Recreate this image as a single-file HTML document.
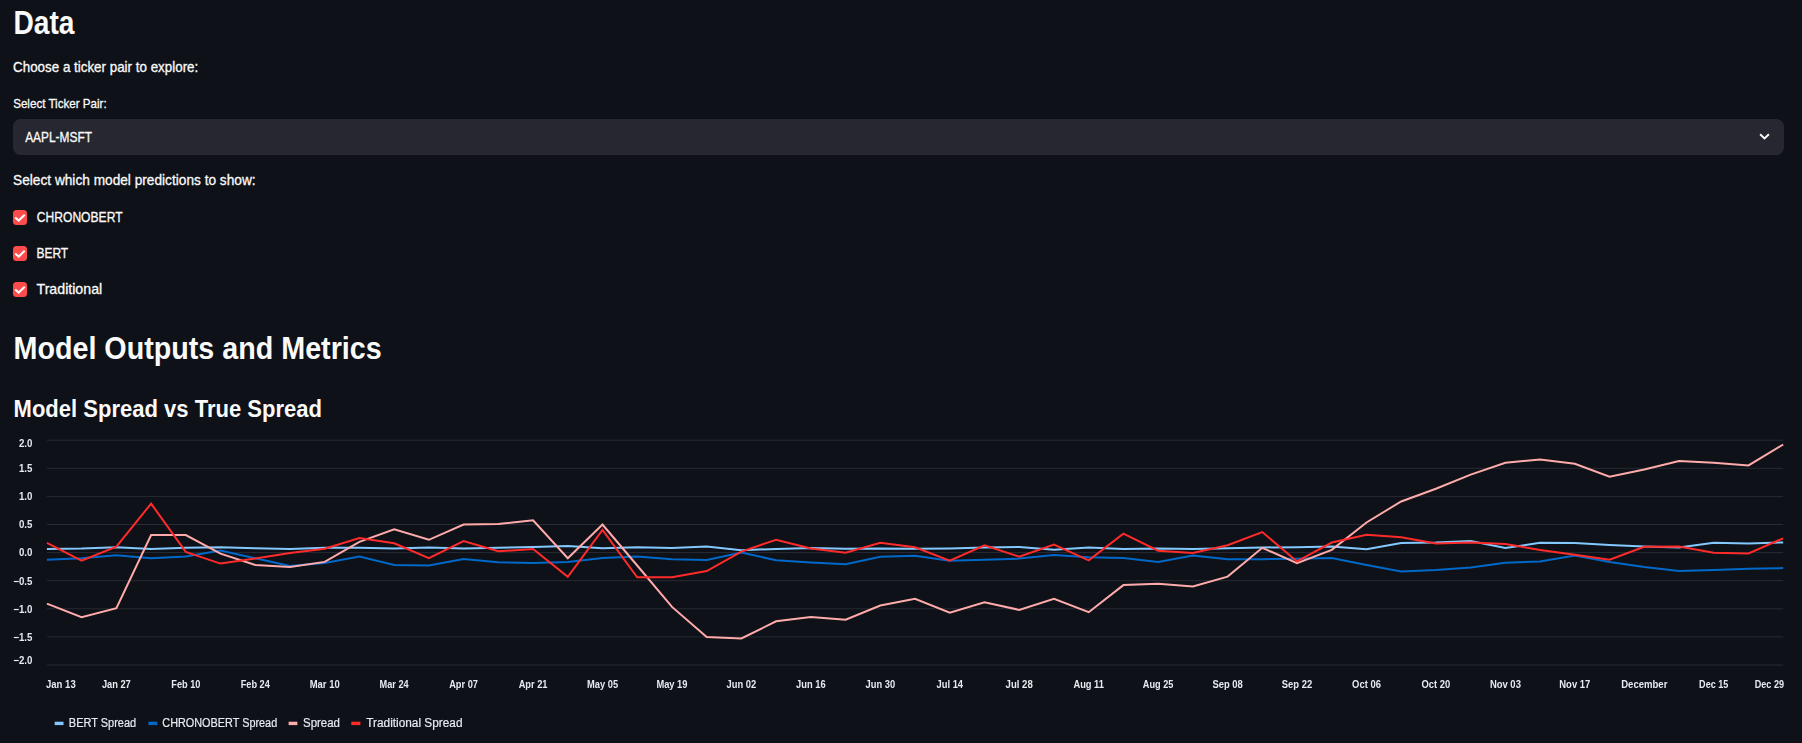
<!DOCTYPE html>
<html lang="en">
<head>
<meta charset="utf-8">
<title>Data · Model Outputs and Metrics</title>
<style>
html,body{margin:0;padding:0;background:#0e1117;}
body{width:1802px;height:743px;position:relative;overflow:hidden;color:#fafafa;
  font-family:"Liberation Sans",sans-serif;-webkit-font-smoothing:antialiased;}
main{position:absolute;left:0;top:0;width:1802px;height:743px;}
.t{position:absolute;left:0;top:0;margin:0;padding:0;white-space:nowrap;transform-origin:0 0;font-weight:400;color:#fafafa;display:block;-webkit-text-stroke:0.3px #fafafa;}
h2.t,h3.t{font-weight:700;-webkit-text-stroke:0;}
.select{position:absolute;left:13px;top:119.2px;width:1771px;height:35.8px;background:#262730;border-radius:7.5px;box-sizing:border-box;}
.select svg{position:absolute;left:1745.7px;top:13.8px;}
.cb{position:absolute;left:13px;width:14.2px;height:14.8px;background:#ff4b4b;border-radius:3.5px;}
.cb svg{position:absolute;left:0;top:0;display:block;}
.chart{position:absolute;left:0;top:0;font-family:"Liberation Sans",sans-serif;will-change:transform;}
</style>
</head>
<body>
<main>
<h2 class="t" style="font-size:32.5px;line-height:39px;transform:translate(13.44px,3.64px) scaleX(0.8656);">Data</h2>
<p class="t" style="font-size:14.3px;line-height:17px;transform:translate(13.03px,58.65px) scaleX(0.9361);">Choose a ticker pair to explore:</p>
<label class="t" style="font-size:13px;line-height:16px;transform:translate(13.18px,96.00px) scaleX(0.8924);">Select Ticker Pair:</label>
<div class="select" role="combobox" aria-label="Select Ticker Pair">
<svg viewBox="0 0 12 8" width="11" height="7.4" aria-hidden="true"><path d="M1.2 1.4 L6 6 L10.8 1.4" fill="none" stroke="#fafafa" stroke-width="2.1"/></svg>
</div>
<div class="t" style="font-size:13.9px;line-height:17px;transform:translate(25.18px,129.08px) scaleX(0.8563);">AAPL-MSFT</div>
<p class="t" style="font-size:14.3px;line-height:17px;transform:translate(13.08px,171.65px) scaleX(0.9566);">Select which model predictions to show:</p>
<span class="cb" style="top:210.1px"><svg viewBox="0 0 14 14.7" width="14.2" height="14.8" aria-hidden="true"><path d="M2.1 7.5 L5.6 10.5 L11.6 4.8" fill="none" stroke="#fff" stroke-width="2" stroke-linecap="butt" stroke-linejoin="miter"/></svg></span>
<label class="t" style="font-size:13.9px;line-height:17px;transform:translate(36.80px,208.78px) scaleX(0.8701);">CHRONOBERT</label>
<span class="cb" style="top:246.1px"><svg viewBox="0 0 14 14.7" width="14.2" height="14.8" aria-hidden="true"><path d="M2.1 7.5 L5.6 10.5 L11.6 4.8" fill="none" stroke="#fff" stroke-width="2" stroke-linecap="butt" stroke-linejoin="miter"/></svg></span>
<label class="t" style="font-size:13.9px;line-height:17px;transform:translate(36.42px,244.78px) scaleX(0.8625);">BERT</label>
<span class="cb" style="top:282.1px"><svg viewBox="0 0 14 14.7" width="14.2" height="14.8" aria-hidden="true"><path d="M2.1 7.5 L5.6 10.5 L11.6 4.8" fill="none" stroke="#fff" stroke-width="2" stroke-linecap="butt" stroke-linejoin="miter"/></svg></span>
<label class="t" style="font-size:13.9px;line-height:17px;transform:translate(36.49px,280.78px) scaleX(1.0212);">Traditional</label>
<h2 class="t" style="font-size:31.3px;line-height:38px;transform:translate(13.51px,330.05px) scaleX(0.9167);">Model Outputs and Metrics</h2>
<h3 class="t" style="font-size:23.1px;line-height:28px;transform:translate(13.55px,395.00px) scaleX(0.9536);">Model Spread vs True Spread</h3>
<svg class="chart" width="1802" height="743" viewBox="0 0 1802 743" role="img" aria-label="Model Spread vs True Spread line chart">
<g stroke="#282a34" stroke-width="1">
<line x1="46.9" x2="1783.2" y1="440.20" y2="440.20"/>
<line x1="46.9" x2="1783.2" y1="468.30" y2="468.30"/>
<line x1="46.9" x2="1783.2" y1="496.40" y2="496.40"/>
<line x1="46.9" x2="1783.2" y1="524.50" y2="524.50"/>
<line x1="46.9" x2="1783.2" y1="552.60" y2="552.60"/>
<line x1="46.9" x2="1783.2" y1="580.70" y2="580.70"/>
<line x1="46.9" x2="1783.2" y1="608.80" y2="608.80"/>
<line x1="46.9" x2="1783.2" y1="636.90" y2="636.90"/>
<line x1="46.9" x2="1783.2" y1="665.00" y2="665.00"/>
</g>
<g class="ax" font-size="10.5" font-weight="700" fill="#e6eaf1" text-anchor="end">
<text x="32.4" y="447.0" textLength="13.5" lengthAdjust="spacingAndGlyphs">2.0</text>
<text x="32.4" y="472.1" textLength="13.5" lengthAdjust="spacingAndGlyphs">1.5</text>
<text x="32.4" y="500.2" textLength="13.5" lengthAdjust="spacingAndGlyphs">1.0</text>
<text x="32.4" y="528.2" textLength="13.5" lengthAdjust="spacingAndGlyphs">0.5</text>
<text x="32.4" y="556.4" textLength="13.5" lengthAdjust="spacingAndGlyphs">0.0</text>
<text x="32.4" y="584.5" textLength="19.1" lengthAdjust="spacingAndGlyphs">−0.5</text>
<text x="32.4" y="612.6" textLength="19.1" lengthAdjust="spacingAndGlyphs">−1.0</text>
<text x="32.4" y="640.7" textLength="19.1" lengthAdjust="spacingAndGlyphs">−1.5</text>
<text x="32.4" y="664.1" textLength="19.1" lengthAdjust="spacingAndGlyphs">−2.0</text>
</g>
<g class="ax" font-size="10.5" font-weight="700" fill="#e6eaf1">
<text x="46.0" y="687.9" textLength="29.7" lengthAdjust="spacingAndGlyphs">Jan 13</text>
<text x="101.9" y="687.9" textLength="28.9" lengthAdjust="spacingAndGlyphs">Jan 27</text>
<text x="171.3" y="687.9" textLength="29.1" lengthAdjust="spacingAndGlyphs">Feb 10</text>
<text x="240.7" y="687.9" textLength="29.1" lengthAdjust="spacingAndGlyphs">Feb 24</text>
<text x="309.7" y="687.9" textLength="30.0" lengthAdjust="spacingAndGlyphs">Mar 10</text>
<text x="379.6" y="687.9" textLength="29.1" lengthAdjust="spacingAndGlyphs">Mar 24</text>
<text x="449.2" y="687.9" textLength="28.8" lengthAdjust="spacingAndGlyphs">Apr 07</text>
<text x="518.7" y="687.9" textLength="28.8" lengthAdjust="spacingAndGlyphs">Apr 21</text>
<text x="587.0" y="687.9" textLength="31.1" lengthAdjust="spacingAndGlyphs">May 05</text>
<text x="656.4" y="687.9" textLength="31.1" lengthAdjust="spacingAndGlyphs">May 19</text>
<text x="726.6" y="687.9" textLength="29.6" lengthAdjust="spacingAndGlyphs">Jun 02</text>
<text x="796.1" y="687.9" textLength="29.6" lengthAdjust="spacingAndGlyphs">Jun 16</text>
<text x="865.5" y="687.9" textLength="29.6" lengthAdjust="spacingAndGlyphs">Jun 30</text>
<text x="936.5" y="687.9" textLength="26.6" lengthAdjust="spacingAndGlyphs">Jul 14</text>
<text x="1005.6" y="687.9" textLength="27.2" lengthAdjust="spacingAndGlyphs">Jul 28</text>
<text x="1073.4" y="687.9" textLength="30.6" lengthAdjust="spacingAndGlyphs">Aug 11</text>
<text x="1142.8" y="687.9" textLength="30.6" lengthAdjust="spacingAndGlyphs">Aug 25</text>
<text x="1212.4" y="687.9" textLength="30.4" lengthAdjust="spacingAndGlyphs">Sep 08</text>
<text x="1281.8" y="687.9" textLength="30.4" lengthAdjust="spacingAndGlyphs">Sep 22</text>
<text x="1352.1" y="687.9" textLength="28.8" lengthAdjust="spacingAndGlyphs">Oct 06</text>
<text x="1421.5" y="687.9" textLength="28.8" lengthAdjust="spacingAndGlyphs">Oct 20</text>
<text x="1489.9" y="687.9" textLength="31.0" lengthAdjust="spacingAndGlyphs">Nov 03</text>
<text x="1559.3" y="687.9" textLength="31.0" lengthAdjust="spacingAndGlyphs">Nov 17</text>
<text x="1621.2" y="687.9" textLength="46.2" lengthAdjust="spacingAndGlyphs">December</text>
<text x="1699.1" y="687.9" textLength="29.2" lengthAdjust="spacingAndGlyphs">Dec 15</text>
<text x="1754.8" y="687.9" textLength="29.2" lengthAdjust="spacingAndGlyphs">Dec 29</text>
</g>
<g fill="none" stroke-width="2" stroke-linejoin="miter" stroke-linecap="butt">
<path stroke="#83c9ff" d="M46.9,548.9 L81.6,548.6 L116.4,547.3 L151.1,549.1 L185.8,547.8 L220.5,547.3 L255.3,548.3 L290.0,549.1 L324.7,547.8 L359.4,547.8 L394.2,548.6 L428.9,547.4 L463.6,548.6 L498.3,547.8 L533.1,547.0 L567.8,545.9 L602.5,548.3 L637.2,547.2 L672.0,547.9 L706.7,546.4 L741.4,550.2 L776.1,548.9 L810.9,548.1 L845.6,548.8 L880.3,548.4 L915.0,548.8 L949.8,548.4 L984.5,547.5 L1019.2,547.0 L1054.0,549.8 L1088.7,547.5 L1123.4,548.9 L1158.1,548.4 L1192.9,549.0 L1227.6,548.3 L1262.3,547.4 L1297.0,547.3 L1331.8,546.6 L1366.5,549.2 L1401.2,543.1 L1435.9,542.6 L1470.7,541.0 L1505.4,548.0 L1540.1,542.8 L1574.8,543.0 L1609.6,545.0 L1644.3,546.4 L1679.0,547.4 L1713.7,542.8 L1748.5,543.6 L1783.2,542.4"/>
<path stroke="#0068c9" d="M46.9,559.7 L81.6,558.2 L116.4,555.2 L151.1,558.2 L185.8,556.4 L220.5,550.6 L255.3,558.2 L290.0,566.1 L324.7,563.1 L359.4,556.6 L394.2,564.9 L428.9,565.6 L463.6,559.0 L498.3,562.3 L533.1,563.1 L567.8,561.9 L602.5,557.9 L637.2,556.6 L672.0,559.3 L706.7,560.1 L741.4,552.5 L776.1,560.3 L810.9,562.4 L845.6,564.2 L880.3,556.8 L915.0,555.8 L949.8,560.7 L984.5,559.8 L1019.2,558.6 L1054.0,555.1 L1088.7,557.2 L1123.4,558.1 L1158.1,561.9 L1192.9,555.6 L1227.6,559.2 L1262.3,559.2 L1297.0,558.8 L1331.8,557.9 L1366.5,564.9 L1401.2,571.4 L1435.9,570.1 L1470.7,567.4 L1505.4,562.8 L1540.1,561.4 L1574.8,555.4 L1609.6,562.0 L1644.3,567.0 L1679.0,571.1 L1713.7,569.9 L1748.5,568.8 L1783.2,568.1"/>
<path stroke="#ffabab" d="M46.9,603.6 L81.6,617.2 L116.4,608.2 L151.1,535.0 L185.8,535.0 L220.5,553.6 L255.3,564.9 L290.0,566.9 L324.7,561.9 L359.4,541.9 L394.2,529.4 L428.9,539.8 L463.6,524.5 L498.3,524.1 L533.1,520.3 L567.8,558.2 L602.5,524.5 L637.2,565.5 L672.0,606.9 L706.7,636.9 L741.4,638.4 L776.1,621.3 L810.9,617.1 L845.6,619.7 L880.3,605.5 L915.0,598.7 L949.8,612.7 L984.5,602.2 L1019.2,609.9 L1054.0,598.7 L1088.7,612.2 L1123.4,585.1 L1158.1,583.7 L1192.9,586.5 L1227.6,576.6 L1262.3,547.8 L1297.0,563.2 L1331.8,549.9 L1366.5,522.5 L1401.2,501.5 L1435.9,488.8 L1470.7,474.6 L1505.4,462.8 L1540.1,459.4 L1574.8,463.8 L1609.6,476.7 L1644.3,469.5 L1679.0,461.0 L1713.7,462.8 L1748.5,465.4 L1783.2,444.5"/>
<path stroke="#ff2b2b" d="M46.9,542.8 L81.6,560.6 L116.4,546.6 L151.1,503.6 L185.8,551.9 L220.5,563.6 L255.3,558.6 L290.0,553.1 L324.7,548.8 L359.4,538.1 L394.2,543.3 L428.9,558.2 L463.6,541.1 L498.3,551.3 L533.1,548.9 L567.8,576.9 L602.5,530.0 L637.2,577.3 L672.0,577.3 L706.7,571.1 L741.4,551.6 L776.1,539.7 L810.9,548.4 L845.6,552.8 L880.3,542.8 L915.0,547.2 L949.8,560.7 L984.5,545.3 L1019.2,556.6 L1054.0,544.6 L1088.7,560.3 L1123.4,533.6 L1158.1,550.7 L1192.9,553.0 L1227.6,545.2 L1262.3,532.1 L1297.0,561.4 L1331.8,542.5 L1366.5,534.7 L1401.2,537.3 L1435.9,543.5 L1470.7,542.4 L1505.4,543.9 L1540.1,550.0 L1574.8,554.8 L1609.6,559.8 L1644.3,546.8 L1679.0,546.4 L1713.7,552.8 L1748.5,553.4 L1783.2,538.3"/>
</g>
<g class="lg" font-size="12" fill="#e6eaf1" stroke="#e6eaf1" stroke-width="0.2">
<rect x="54.7" y="721.7" width="8.8" height="3.4" fill="#83c9ff" stroke="none"/>
<text x="68.8" y="726.9" textLength="67.4" lengthAdjust="spacingAndGlyphs">BERT Spread</text>
<rect x="148.4" y="721.7" width="8.9" height="3.4" fill="#0068c9" stroke="none"/>
<text x="162.3" y="726.9" textLength="114.9" lengthAdjust="spacingAndGlyphs">CHRONOBERT Spread</text>
<rect x="288.6" y="721.7" width="8.8" height="3.4" fill="#ffabab" stroke="none"/>
<text x="303.0" y="726.9" textLength="36.9" lengthAdjust="spacingAndGlyphs">Spread</text>
<rect x="351.3" y="721.7" width="9.1" height="3.4" fill="#ff2b2b" stroke="none"/>
<text x="366.3" y="726.9" textLength="96.2" lengthAdjust="spacingAndGlyphs">Traditional Spread</text>
</g>
</svg>
</main>
</body>
</html>
